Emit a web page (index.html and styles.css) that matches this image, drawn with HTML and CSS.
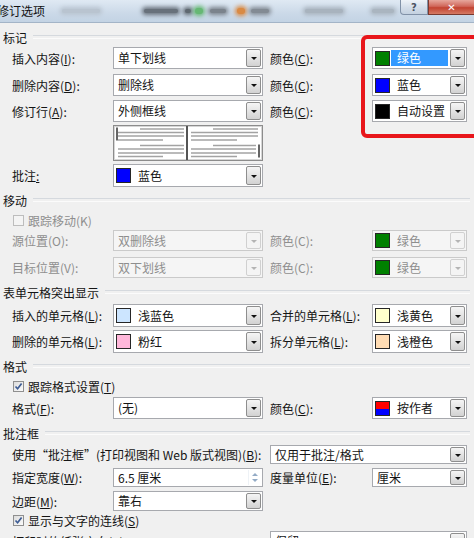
FILE: index.html
```html
<!DOCTYPE html>
<html lang="zh-CN">
<head>
<meta charset="utf-8">
<title>修订选项</title>
<link rel="stylesheet" href="styles.css">
</head>
<body>
<div class="dialog">
  <div class="titlebar">
    <span class="title">修订选项</span>
    <div class="glass">
      <span class="blob ba"></span><span class="blob bb"></span><span class="blob bc"></span><span class="blob bd"></span><span class="blob be"></span><span class="blob bf"></span><span class="blob bg2"></span><span class="blob bh"></span><span class="blob bi"></span>
    </div>
    <span class="help">?</span>
    <span class="closebtn">✕</span>
  </div>

  <div class="content">
    <div class="hdr mt4"><span>标记</span></div>
    <div class="row h22">
      <span class="lbl">插入内容(<u>I</u>):</span>
      <div class="combo c1"><span class="val">单下划线</span><span class="arr"></span></div>
      <span class="lbl2">颜色(<u>C</u>):</span>
      <div class="combo c2"><span class="sw green"></span><span class="val sel">绿色</span><span class="arr"></span></div>
    </div>
    <div class="row h22 mt5">
      <span class="lbl">删除内容(<u>D</u>):</span>
      <div class="combo c1"><span class="val">删除线</span><span class="arr"></span></div>
      <span class="lbl2">颜色(<u>C</u>):</span>
      <div class="combo c2"><span class="sw blue"></span><span class="val">蓝色</span><span class="arr"></span></div>
    </div>
    <div class="row h22 mt4">
      <span class="lbl">修订行(<u>A</u>):</span>
      <div class="combo c1"><span class="val">外侧框线</span><span class="arr"></span></div>
      <span class="lbl2">颜色(<u>C</u>):</span>
      <div class="combo c2"><span class="sw black"></span><span class="val">自动设置</span><span class="arr"></span></div>
    </div>
    <div class="previewrow mt3">
      <svg class="preview" width="150" height="36" viewBox="0 0 150 36">
        <rect x="0.5" y="0.5" width="149" height="35" fill="#fff" stroke="#8c8c8c"/>
        <rect x="1.5" y="1.5" width="147" height="33" fill="none" stroke="#d6d6d6"/>
        <g stroke="#a3a3a3" stroke-width="1.3">
          <line x1="27" y1="4" x2="71" y2="4"/>
          <line x1="5" y1="7.5" x2="71" y2="7.5"/>
          <line x1="5" y1="11" x2="71" y2="11"/>
          <line x1="5" y1="15" x2="50" y2="15"/>
          <line x1="27" y1="20.5" x2="71" y2="20.5"/>
          <line x1="5" y1="24" x2="71" y2="24"/>
          <line x1="5" y1="28" x2="71" y2="28"/>
          <line x1="5" y1="31.5" x2="50" y2="31.5"/>
          <line x1="100" y1="4" x2="145" y2="4"/>
          <line x1="78" y1="7.5" x2="145" y2="7.5"/>
          <line x1="78" y1="11" x2="145" y2="11"/>
          <line x1="78" y1="15" x2="124" y2="15"/>
          <line x1="100" y1="20.5" x2="143" y2="20.5"/>
          <line x1="78" y1="24" x2="143" y2="24"/>
          <line x1="78" y1="28" x2="143" y2="28"/>
          <line x1="78" y1="31.5" x2="124" y2="31.5"/>
        </g>
        <line x1="74" y1="1" x2="74" y2="35" stroke="#555" stroke-width="2"/>
        <line x1="4" y1="2.5" x2="4" y2="15.5" stroke="#333" stroke-width="1.5"/>
        <line x1="146" y1="19.5" x2="146" y2="32.5" stroke="#333" stroke-width="1.5"/>
      </svg>
    </div>
    <div class="row h23 mt3">
      <span class="lbl">批注<u>:</u></span>
      <div class="combo c1"><span class="sw blue"></span><span class="val">蓝色</span><span class="arr"></span></div>
    </div>

    <div class="hdr mt3"><span>移动</span></div>
    <div class="chkrow mt1 dis-t">
      <span class="cb dis"></span><span>跟踪移动(K)</span>
    </div>
    <div class="row h21 mt1 dis-t">
      <span class="lbl">源位置(O):</span>
      <div class="combo c1 dis"><span class="val">双删除线</span><span class="arr"></span></div>
      <span class="lbl2">颜色(C):</span>
      <div class="combo c2 dis"><span class="sw green"></span><span class="val">绿色</span><span class="arr"></span></div>
    </div>
    <div class="row h21 mt6 dis-t">
      <span class="lbl">目标位置(V):</span>
      <div class="combo c1 dis"><span class="val">双下划线</span><span class="arr"></span></div>
      <span class="lbl2">颜色(C):</span>
      <div class="combo c2 dis"><span class="sw green"></span><span class="val">绿色</span><span class="arr"></span></div>
    </div>

    <div class="hdr mt4"><span>表单元格突出显示</span></div>
    <div class="row h23 mt2">
      <span class="lbl">插入的单元格(<u>L</u>):</span>
      <div class="combo c1"><span class="sw lblue"></span><span class="val">浅蓝色</span><span class="arr"></span></div>
      <span class="lbl2">合并的单元格(<u>L</u>):</span>
      <div class="combo c2"><span class="sw lyellow"></span><span class="val">浅黄色</span><span class="arr"></span></div>
    </div>
    <div class="row h23 mt3">
      <span class="lbl">删除的单元格(<u>L</u>):</span>
      <div class="combo c1"><span class="sw pink"></span><span class="val">粉红</span><span class="arr"></span></div>
      <span class="lbl2">拆分单元格(<u>L</u>):</span>
      <div class="combo c2"><span class="sw lorange"></span><span class="val">浅橙色</span><span class="arr"></span></div>
    </div>

    <div class="hdr mt3"><span>格式</span></div>
    <div class="chkrow mt1">
      <span class="cb"><svg width="9" height="9" viewBox="0 0 9 9"><path d="M1.5 4.5 L3.6 6.8 L7.6 1.6" fill="none" stroke="#3d5c94" stroke-width="1.7"/></svg></span><span>跟踪格式设置(<u>T</u>)</span>
    </div>
    <div class="row h22 mt2">
      <span class="lbl">格式(<u>F</u>):</span>
      <div class="combo c1"><span class="val">(无)</span><span class="arr"></span></div>
      <span class="lbl2">颜色(<u>C</u>):</span>
      <div class="combo c2"><span class="sw byauthor"></span><span class="val">按作者</span><span class="arr"></span></div>
    </div>

    <div class="hdr mt4"><span>批注框</span></div>
    <div class="row h19 mt2">
      <span class="lblwide">使用“批注框”(打印视图和 Web 版式视图)(<u>B</u>):</span>
      <div class="combo c3"><span class="val">仅用于批注/格式</span><span class="arr"></span></div>
    </div>
    <div class="row h19 mt4">
      <span class="lbl">指定宽度(<u>W</u>):</span>
      <div class="combo c1"><span class="val">6.5 厘米</span><span class="spinarr"></span></div>
      <span class="lbl2">度量单位(<u>E</u>):</span>
      <div class="combo c2"><span class="val">厘米</span><span class="arr"></span></div>
    </div>
    <div class="row h20 mt4">
      <span class="lbl">边距(<u>M</u>):</span>
      <div class="combo c1"><span class="val">靠右</span><span class="arr"></span></div>
    </div>
    <div class="chkrow">
      <span class="cb"><svg width="9" height="9" viewBox="0 0 9 9"><path d="M1.5 4.5 L3.6 6.8 L7.6 1.6" fill="none" stroke="#3d5c94" stroke-width="1.7"/></svg></span><span>显示与文字的连线(<u>S</u>)</span>
    </div>
    <div class="row h20 mt2">
      <span class="lblwide">打印时的纸张方向(<u>P</u>):</span>
      <div class="combo c3"><span class="val">保留</span><span class="arr"></span></div>
    </div>
  </div>

  <div class="redbox"></div>
</div>
</body>
</html>
```

FILE: styles.css
```css
* { box-sizing: border-box; }
html, body { margin: 0; padding: 0; }
body {
  width: 474px;
  height: 538px;
  overflow: hidden;
  background: #f0f0f0;
  font-family: "Noto Sans CJK SC", "Noto Sans", sans-serif;
  font-size: 12px;
  color: #141414;
}
u { text-decoration: underline; text-underline-offset: 1px; }

.dialog { position: relative; width: 474px; height: 538px; overflow: hidden; }

/* title bar */
.titlebar {
  height: 23px;
  display: grid;
  grid-template-columns: 48px 352px 28px 46px;
  align-items: start;
  background: linear-gradient(#dfe9f3, #cbd9e8 60%, #c3d3e4);
  border-bottom: 1px solid #a3b4c7;
  overflow: hidden;
}
.title { line-height: 21px; margin-left: -3px; white-space: nowrap; color: #111; }
.glass { height: 21px; display: flex; align-items: center; overflow: hidden; }
.blob { display: block; height: 4px; border-radius: 3px; flex: none; }
.ba { width: 38px; margin-left: 14px; background: #b9c4d0; box-shadow: 0 0 4px 2px #b9c4d0; }
.bb { width: 34px; margin-left: 44px; background: #68717b; box-shadow: 0 0 4px 2px #68717b; }
.bc { width: 6px; margin-left: 7px; background: #5f6871; box-shadow: 0 0 4px 2px #5f6871; }
.bd { width: 8px; margin-left: 4px; height: 6px; background: #66b874; box-shadow: 0 0 4px 2px #66b874; }
.be { width: 16px; margin-left: 7px; background: #7b838c; box-shadow: 0 0 4px 2px #7b838c; }
.bf { width: 8px; margin-left: 11px; height: 6px; background: #d98a44; box-shadow: 0 0 4px 2px #d98a44; }
.bg2 { width: 18px; margin-left: 6px; background: #838b94; box-shadow: 0 0 4px 2px #838b94; }
.bh { width: 38px; margin-left: 36px; background: #a8b3be; box-shadow: 0 0 4px 2px #a8b3be; }
.bi { width: 22px; margin-left: 29px; background: #aab5c0; box-shadow: 0 0 4px 2px #aab5c0; }
.help {
  height: 15px;
  border: 1px solid #8191a7; border-top: none;
  border-radius: 0 0 0 4px;
  background: linear-gradient(#eef3f8, #d3dde9 55%, #c4d1e0);
  display: flex; align-items: center; justify-content: center;
  font-family: "DejaVu Sans", sans-serif; font-size: 10px; font-weight: bold; color: #4a5363;
}
.closebtn {
  height: 15px;
  border: 1px solid #7a3a30; border-top: none; border-right: none;
  background: linear-gradient(#e6a79d, #d0675a 45%, #c24331 55%, #d57a64);
  display: flex; align-items: center; justify-content: center;
  font-family: "DejaVu Sans", sans-serif; font-size: 10px; font-weight: bold; color: #fff;
}

/* content */
.content { display: flex; flex-direction: column; width: 474px; }
.mt1 { margin-top: 1px; }
.mt2 { margin-top: 2px; }
.mt3 { margin-top: 3px; }
.mt4 { margin-top: 4px; }
.mt5 { margin-top: 5px; }
.mt6 { margin-top: 6px; }
.h19 { height: 19px; }
.h20 { height: 20px; }
.h21 { height: 21px; }
.h22 { height: 22px; }
.h23 { height: 23px; }

.hdr {
  height: 20px;
  display: flex;
  align-items: center;
  padding-left: 3px;
  padding-right: 4px;
  white-space: nowrap;
}
.hdr::after {
  content: "";
  flex: 1;
  height: 2px;
  margin-left: 6px;
  border-top: 1px solid #d5d9de;
  border-bottom: 1px solid #fbfbfb;
}

.row {
  display: flex;
  align-items: center;
  width: 467px;
  padding-left: 12px;
  white-space: nowrap;
}
.lbl { width: 101px; flex: none; }
.lbl2 { width: 102px; margin-left: 7px; flex: none; }
.lblwide { flex: 1; }
.c1 { width: 150px; }
.c2 { width: 95px; }
.c3 { width: 197px; }

.dis-t { color: #8e8e8e; }

.combo {
  height: 100%;
  flex: none;
  display: flex;
  align-items: center;
  background: #fff;
  border: 1px solid #a7a9ae;
  padding: 1px;
}
.val { flex: 1; padding-left: 3px; line-height: 16px; overflow: hidden; }
.sw + .val { padding-left: 6px; margin-left: 1px; }
.sel { background: #3399ff; color: #fff; margin-right: 2px; }
.arr {
  align-self: stretch;
  width: 15px;
  flex: none;
  border: 1px solid #8e8e8e;
  border-radius: 2px;
  background: linear-gradient(#f5f5f5, #e4e4e4 50%, #d2d2d2);
  display: flex;
  align-items: center;
  justify-content: center;
}
.arr::after {
  content: "";
  width: 0; height: 0;
  border-left: 3px solid transparent;
  border-right: 3px solid transparent;
  border-top: 3px solid #111;
  margin-top: 1px;
}
.combo.dis { background: #f5f5f5; border-color: #cacaca; color: #8e8e8e; }
.combo.dis .arr { border-color: #d0d0d0; background: #f4f4f4; }
.combo.dis .arr::after { border-top-color: #b4b4b4; }

.spinarr {
  align-self: stretch;
  width: 13px;
  flex: none;
  display: flex;
  flex-direction: column;
  align-items: center;
  justify-content: center;
  gap: 3px;
  border-left: 1px solid #eef2f6;
}
.spinarr::before {
  content: "";
  border-left: 3px solid transparent;
  border-right: 3px solid transparent;
  border-bottom: 3px solid #94abc6;
}
.spinarr::after {
  content: "";
  border-left: 3px solid transparent;
  border-right: 3px solid transparent;
  border-top: 3px solid #94abc6;
}

.sw { width: 15px; height: 15px; flex: none; margin-left: 1px; border: 1px solid #262626; }
.green { background: #008000; }
.blue { background: #0000ff; }
.black { background: #000; }
.lblue { background: #cce5ff; }
.lyellow { background: #ffffcc; }
.pink { background: #ffb7da; }
.lorange { background: #ffdcb4; }
.byauthor { background: linear-gradient(#ff0000 50%, #0000ff 50%); }

.previewrow { height: 36px; padding-left: 113px; display: flex; }
.preview { display: block; }

.chkrow {
  height: 18px;
  display: flex;
  align-items: center;
  padding-left: 13px;
  white-space: nowrap;
}
.cb {
  width: 11px; height: 11px;
  flex: none;
  margin-right: 4px;
  border: 1px solid #8f8f8f;
  background: linear-gradient(135deg, #dcdcdc, #fbfbfb);
  display: flex;
  align-items: center;
  justify-content: center;
}
.cb.dis { border-color: #bdbdbd; background: #f4f4f4; }
.cb svg { display: block; }

.redbox {
  position: absolute;
  left: 361px;
  top: 35px;
  width: 125px;
  height: 103px;
  border: 4px solid #e8161b;
  border-radius: 6px;
}
```
